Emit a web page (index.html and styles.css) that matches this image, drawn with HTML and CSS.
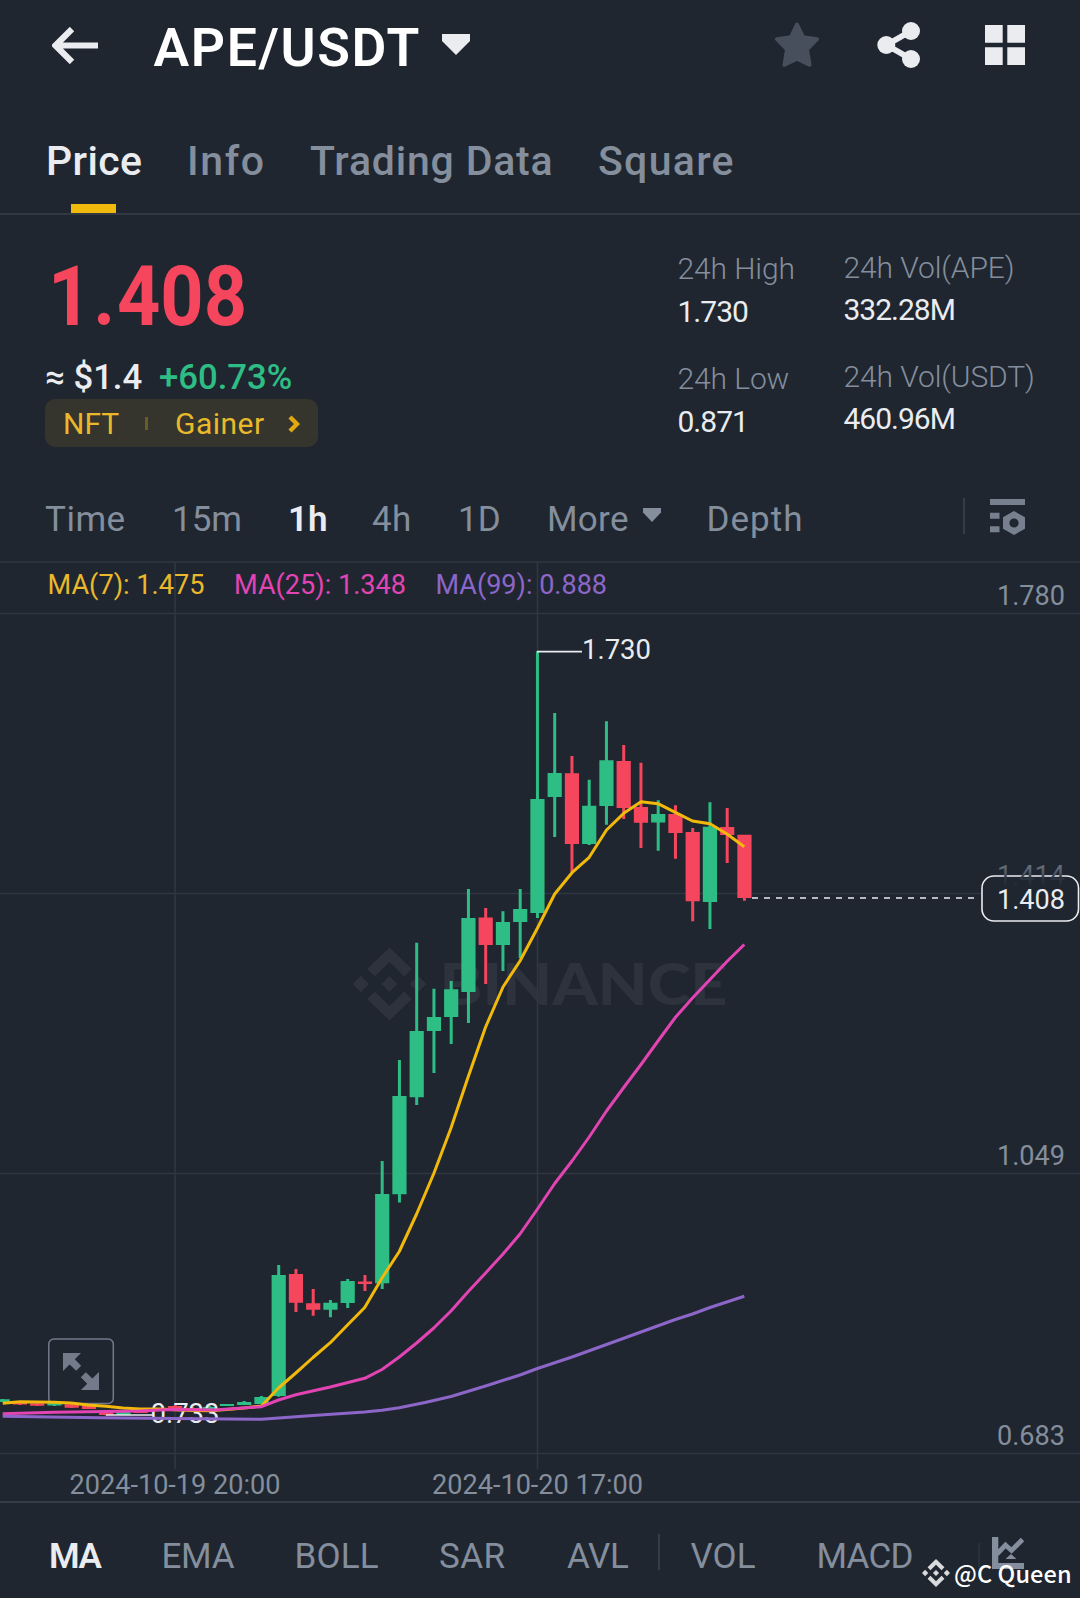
FILE: index.html
```html
<!DOCTYPE html>
<html lang="en">
<head>
<meta charset="utf-8">
<title>APE/USDT</title>
<link rel="stylesheet" href="styles.css">
</head>
<body>
<svg class="defs" width="0" height="0">
  <symbol id="logo" viewBox="-37 -37 74 74">
    <path d="M0-36.7-22.3-15l7.6 7.5L0-22 14.7-7.5l7.6-7.5zM0 36.7-22.3 15l7.6-7.5L0 22 14.7 7.5l7.6 7.5zM-28.7-8.3-37 0l8.3 8.3 8.3-8.3zM28.7-8.3 37 0l-8.3 8.3L20.4 0zM0-8l-8 8 8 8 8-8z"/>
  </symbol>
</svg>

<header class="header">
  <svg class="back" width="46" height="37" viewBox="0 0 46 37"><path d="M46 18.500H5M20 2 3.500 18.500 20 35" fill="none" stroke="#eaecef" stroke-width="6.200"/></svg>
  <h1 class="pair">APE/USDT</h1>
  <svg class="pair-caret" width="28" height="21" viewBox="0 0 28 21"><path d="M0 0h28v7L14 21 0 7z" fill="#eaecef"/></svg>
  <svg class="star" width="46" height="46" viewBox="0 0 46 46"><path d="M23 2.500 29.200 15.300 43 17.200 33 27.300 35.500 42.800 23 36.700 10.500 42.800 13 27.300 3 17.200 16.800 15.300z" fill="#474f5d" stroke="#474f5d" stroke-width="4" stroke-linejoin="round"/></svg>
  <svg class="share" width="44" height="46" viewBox="0 0 44 46" fill="#eaecef"><path d="M9.500 23 34 9M9.500 23 34 37" stroke="#eaecef" stroke-width="6"/><circle cx="9.300" cy="23" r="9"/><circle cx="34" cy="9" r="9"/><circle cx="34" cy="37" r="9"/></svg>
  <svg class="grid-icon" width="40" height="40" viewBox="0 0 40 40" fill="#eaecef"><path d="M0 0h17.700v17.700H0zM22.300 0H40v17.700H22.300zM0 22.300h17.700V40H0zM22.300 22.300H40V40H22.300z"/></svg>
</header>

<nav class="tabs">
  <a class="tab tab-active">Price</a>
  <a class="tab tab-info">Info</a>
  <a class="tab tab-trading">Trading Data</a>
  <a class="tab tab-square">Square</a>
</nav>

<section class="summary">
  <div class="quote">
    <div class="last">1<span class="dot">.</span>408</div>
    <div class="change"><span class="fiat">≈ $1.4</span><span class="up">+60.73%</span></div>
    <div class="tags">
      <span class="nft">NFT</span><i class="tag-sep"></i><span class="gainer">Gainer</span>
      <svg width="12" height="18" viewBox="0 0 12 18"><path d="M2 2l7 7-7 7" fill="none" stroke="#e0a90f" stroke-width="4.400"/></svg>
    </div>
  </div>
  <dl class="stats">
    <div><dt>24h High</dt><dd>1.730</dd></div>
    <div><dt>24h Low</dt><dd>0.871</dd></div>
  </dl>
  <dl class="stats stats-vol">
    <div><dt>24h Vol(APE)</dt><dd>332.28M</dd></div>
    <div><dt>24h Vol(USDT)</dt><dd>460.96M</dd></div>
  </dl>
</section>

<nav class="intervals">
  <span class="i-time">Time</span>
  <span class="i-15">15m</span>
  <span class="i-1h">1h</span>
  <span class="i-4h">4h</span>
  <span class="i-1d">1D</span>
  <span class="i-more">More</span>
  <svg class="more-caret" width="18" height="14" viewBox="0 0 18 14"><path d="M0 0h18v4.500L9 14 0 4.500z" fill="#848e9c"/></svg>
  <span class="i-depth">Depth</span>
  <i class="bar-sep"></i>
  <svg class="settings" width="35" height="36" viewBox="0 0 35 36" fill="#76808f"><path d="M0 0h35v6H0zM0 13.700h9.500v6H0zM0 27.300h9.500v6H0z"/><path fill-rule="evenodd" d="M24 12 35 18.200V29.800L24 36 13 29.800V18.200zM24 19.400a4.600 4.600 0 1 0 0 9.200 4.600 4.600 0 0 0 0-9.200z"/></svg>
</nav>

<main>
  <svg id="chart" class="chart" width="1080" height="938" viewBox="0 563 1080 938">
    <defs>
      <linearGradient id="fade" gradientUnits="userSpaceOnUse" x1="0" y1="864" x2="0" y2="886">
        <stop offset="0" stop-color="#6b7481"/><stop offset=".45" stop-color="#4d5561"/><stop offset=".6" stop-color="#2d3540"/><stop offset="1" stop-color="#222a34"/>
      </linearGradient>
    </defs>
    <g class="watermark"><use href="#logo" x="352.500" y="947" width="74" height="74"/><text x="439.500" y="1005" textLength="288" lengthAdjust="spacingAndGlyphs">BINANCE</text></g>
    <path class="gridline" d="M0 613.500H1080M0 893.500H1080M0 1173.500H1080M0 1453.500H1080M175 563V1469M537.500 563V1469"/>
    <g class="expand"><rect x="48.800" y="1339" width="64.500" height="64.500" rx="5"/><path d="M63 1353h18l-6.200 6.200 6.400 6.600-5 5-6.600-6.400-6.600 6.600zM99 1390H81l6.200-6.200-6.400-6.600 5-5 6.600 6.400 6.600-6.600z"/></g>
    <g id="candles"></g>
    <g class="callout">
      <path d="M537 651.700H582M106 1415H153"/>
      <text x="582" y="659" textLength="69" lengthAdjust="spacingAndGlyphs">1.730</text>
      <text x="150.500" y="1422.700" textLength="69" lengthAdjust="spacingAndGlyphs">0.733</text>
    </g>
    <g id="averages"></g>
    <path class="last-line" d="M752 898H975"/>
    <g class="axis">
      <text x="997" y="605" textLength="68" lengthAdjust="spacingAndGlyphs">1.780</text>
      <text x="997" y="1165" textLength="68" lengthAdjust="spacingAndGlyphs">1.049</text>
      <text x="997" y="1445" textLength="68" lengthAdjust="spacingAndGlyphs">0.683</text>
      <text x="69.500" y="1494" textLength="211" lengthAdjust="spacingAndGlyphs">2024-10-19 20:00</text>
      <text x="432" y="1494" textLength="211" lengthAdjust="spacingAndGlyphs">2024-10-20 17:00</text>
    </g>
    <g class="last-tag">
      <rect x="982" y="876" width="96.500" height="45" rx="12"/>
      <text class="covered" x="997" y="884.500" textLength="68" lengthAdjust="spacingAndGlyphs">1.414</text>
      <text x="997" y="909" textLength="68" lengthAdjust="spacingAndGlyphs">1.408</text>
    </g>
    <g class="legend">
      <text class="ma7" x="47.500" y="594" textLength="157" lengthAdjust="spacingAndGlyphs">MA(7): 1.475</text>
      <text class="ma25" x="234" y="594" textLength="172" lengthAdjust="spacingAndGlyphs">MA(25): 1.348</text>
      <text class="ma99" x="435.500" y="594" textLength="171.500" lengthAdjust="spacingAndGlyphs">MA(99): 0.888</text>
    </g>
  </svg>
</main>

<footer class="indicators">
  <span class="f-ma">MA</span>
  <span class="f-ema">EMA</span>
  <span class="f-boll">BOLL</span>
  <span class="f-sar">SAR</span>
  <span class="f-avl">AVL</span>
  <i class="foot-sep"></i>
  <span class="f-vol">VOL</span>
  <span class="f-macd">MACD</span>
  <i class="foot-sep foot-sep-dim"></i>
  <svg class="chart-icon" width="32" height="32" viewBox="0 0 32 32"><path fill="#848e9c" d="M0 0h6.300v26H32v6H0z"/><path d="M5 17 13.500 8 19.500 13.500 30.500 2.500" fill="none" stroke="#848e9c" stroke-width="4.800"/><path d="M19 17l5.500 5h-11z" fill="#848e9c"/></svg>
</footer>
<div class="credit"><svg width="28" height="28" fill="#d9dadc"><use href="#logo" width="28" height="28"/></svg><span>@C Queen</span></div>
<script src="chart.js"></script>
</body>
</html>
```
FILE: styles.css
```css
* { box-sizing: border-box; }
body {
  position: relative;
  width: 1080px;
  height: 1598px;
  margin: 0;
  overflow: hidden;
  background: #1f2630;
  color: #848e9c;
  font-family: Roboto, "Liberation Sans", sans-serif;
}
h1, dl, dd { margin: 0; font: inherit; }
svg { display: block; flex: none; }
.defs { position: absolute; }
span, a { white-space: nowrap; flex: none; }

.header { display: flex; height: 95px; align-items: flex-start; }
.back { margin: 26.5px 0 0 52px; }
.pair { width: 297px; margin-left: 55.5px; color: #fff; font-size: 53.5px; font-weight: 600; line-height: 95px; letter-spacing: 1.6px; }
.pair-caret { margin: 34px 0 0 -8.5px; }
.star { margin: 22px 0 0 304px; }
.share { margin: 22px 0 0 57px; }
.grid-icon { margin: 25px 0 0 64px; }

.tabs { display: grid; grid-template-columns: 141px 123px 288px 1fr; height: 120px; padding: 35.5px 0 0 46px; border-bottom: 2px solid #323942; font-size: 41px; font-weight: 500; line-height: 60px; }
.tab { height: 82.5px; }
.tab-info { letter-spacing: 1.6px; }
.tab-trading { letter-spacing: .8px; }
.tab-square { letter-spacing: 1.3px; }
.tab-active { display: flex; flex-direction: column; color: #eaecef; letter-spacing: .4px; }
.tab-active::after { content: ""; width: 45px; height: 9px; margin: 13.5px 0 0 25px; background: #f0b90b; }

.summary { display: flex; height: 260px; }
.quote { width: 677.5px; padding: 41.5px 0 0 45px; }
.last { height: 80px; color: #f6465d; font-size: 84px; font-weight: 700; line-height: 80px; transform: translateX(3px) scaleX(.9); transform-origin: left; }
.dot { margin: 0 2px; }
.change { display: flex; height: 44px; margin-top: 18.5px; font-size: 34.7px; font-weight: 500; line-height: 44px; }
.fiat { width: 114px; color: #eaecef; }
.up { color: #2ebd85; }
.tags { display: flex; align-items: center; width: 273px; height: 48px; padding: 1px 0 0 18px; border-radius: 10px; background: #35342d; color: #e9b92b; font-size: 30px; line-height: 47px; }
.nft { width: 82px; }
.tag-sep { width: 3px; height: 13px; background: #6b5b27; }
.gainer { width: 113px; margin-left: 27px; letter-spacing: .5px; }
.stats { width: 166px; padding-top: 32px; font-size: 30px; line-height: 43px; }
.stats-vol { width: 236px; padding-top: 31px; }
.stats > div { height: 86px; margin-bottom: 24px; }
.stats-vol > div { height: 85px; }
.stats dt { font-weight: 300; white-space: nowrap; letter-spacing: -.1px; }
.stats dd { color: #eaecef; letter-spacing: -1px; }
.stats-vol dd { line-height: 42px; }

.intervals { display: flex; align-items: center; height: 88px; padding: 2px 0 0 45px; border-bottom: 2px solid #2b323c; font-size: 35px; }
.i-time { width: 127px; letter-spacing: .5px; }
.i-15 { width: 116px; }
.i-1h { width: 84px; color: #eaecef; font-weight: 600; }
.i-4h { width: 86px; letter-spacing: .4px; }
.i-1d { width: 89px; }
.i-more { width: 96px; letter-spacing: .3px; }
.more-caret { margin-top: -8px; }
.i-depth { width: 256px; margin-left: 45.500px; letter-spacing: 1px; }
.bar-sep { width: 2px; height: 36px; margin-top: -6px; background: #353c47; }
.settings { margin: -4px 0 0 25px; }

.chart { font-size: 28px; }
.gridline { fill: none; stroke: #303741; stroke-width: 1.600; }
.watermark { fill: #2d323c; font: 900 57px Lato, sans-serif; }
.expand rect { fill: none; stroke: #737b8a; stroke-width: 1.500; }
.expand path { fill: #737b8a; }
.up-candle { fill: #2ebd85; }
.down-candle { fill: #f6465d; }
.average { fill: none; stroke-width: 3; stroke-linejoin: round; }
.average-7 { stroke: #f0b90b; }
.average-25 { stroke: #e244b4; }
.average-99 { stroke: #8d66c9; }
.callout path { stroke: #eaecef; stroke-width: 1.700; }
.callout text { fill: #eaecef; }
.last-line { stroke: #eaecef; stroke-width: 1.700; stroke-dasharray: 6 6; }
.axis { fill: #848e9c; }
.last-tag rect { fill: #1f2630; stroke: #eaecef; stroke-width: 1.600; }
.last-tag text { fill: #eaecef; }
.last-tag .covered { fill: url(#fade); }
.ma7 { fill: #e9b92b; }
.ma25 { fill: #e244b4; }
.ma99 { fill: #8d66c9; }

.indicators { display: flex; align-items: center; height: 97px; padding: 11px 0 0 49px; border-top: 2px solid #353c47; font-size: 35px; }
.f-ma { width: 112.500px; color: #eaecef; font-weight: 600; letter-spacing: -1.5px; }
.f-ema { width: 133px; letter-spacing: -.3px; }
.f-boll { width: 144.500px; letter-spacing: .2px; }
.f-sar { width: 128px; letter-spacing: .5px; }
.f-avl { width: 91px; letter-spacing: -.3px; }
.foot-sep { width: 2px; height: 36px; margin-top: -8px; background: #353c47; }
.f-vol { width: 126px; margin-left: 30.500px; }
.f-macd { width: 161.500px; letter-spacing: -.8px; }
.foot-sep-dim { height: 24px; margin-top: -2px; background: #29303b; }
.chart-icon { margin: -6px 0 0 12px; }
.credit { position: absolute; left: 922px; top: 1555px; display: flex; align-items: center; gap: 4px; color: #fff; font: 500 23.5px/36px "Noto Sans CJK SC", sans-serif; letter-spacing: .1px; }
```
FILE: chart.js
```js
const SVG = "http://www.w3.org/2000/svg";
const STEP = 17.25;
const FIRST_X = 2.7;

// direction, high, body top, body bottom, low
const candles = [
  ["u", 1399, 1399.3, 1402, 1402], ["d", 1402, 1402.5, 1404.5, 1405], ["d", 1403, 1403.3, 1405.7, 1406],
  ["u", 1403, 1403, 1405.5, 1406], ["d", 1404, 1404.3, 1407.7, 1408], ["d", 1405, 1405.7, 1409, 1409],
  ["d", 1410, 1411, 1415, 1415.5], ["u", 1411, 1411.7, 1415, 1415], ["d", 1410, 1411, 1413, 1413],
  ["u", 1408, 1409, 1411, 1411], ["d", 1405, 1406, 1409, 1409], ["d", 1407, 1408, 1410, 1410],
  ["u", 1406, 1407, 1409, 1409], ["u", 1404, 1404, 1406, 1406], ["u", 1401, 1402, 1405, 1405],
  ["u", 1396, 1397, 1404, 1404], ["u", 1265, 1275, 1396, 1396.7], ["d", 1269, 1274, 1302.7, 1312],
  ["d", 1289, 1303.3, 1309.7, 1315.7], ["u", 1300, 1302.7, 1309.7, 1317.3], ["u", 1279, 1281, 1303, 1308],
  ["d", 1275, 1281.5, 1284, 1291], ["u", 1161, 1194, 1283.3, 1289], ["u", 1060, 1096, 1194.3, 1202.5],
  ["u", 942.7, 1031, 1097.3, 1105], ["u", 988.7, 1017, 1031, 1073], ["u", 981, 989.3, 1017, 1044],
  ["u", 889, 918, 992, 1023], ["d", 908, 917.5, 945, 984], ["u", 911.3, 922, 945, 971],
  ["u", 889, 909, 922, 958], ["u", 651.3, 799, 913, 918], ["u", 713, 773, 797, 837],
  ["d", 756, 773.3, 844, 872], ["u", 779.7, 805.7, 844, 845], ["u", 721.3, 760.3, 806, 824.7],
  ["d", 745, 761, 808, 819], ["d", 762.7, 807, 822.7, 848], ["u", 800.3, 814, 822.5, 850.7],
  ["d", 805.3, 814, 833, 858.7], ["d", 828, 832, 901.3, 921.3], ["u", 802.3, 826.7, 902, 929],
  ["d", 808, 827, 835, 863], ["d", 834.7, 834.7, 898, 900.7]
];

const averages = {
  7: [[2.7, 1403.3], [20, 1401.7], [54, 1402.3], [71, 1403], [88, 1405], [106, 1406.3], [123, 1408], [140, 1409], [158, 1409], [192, 1410.5], [209, 1410.7], [227, 1409.5], [244, 1408], [261.5, 1406], [278.5, 1388], [295.8, 1373], [313, 1357.5], [330.3, 1342.7], [347.5, 1325], [364.7, 1307.5], [382, 1278], [399.3, 1251.5], [416.6, 1214], [433.8, 1173.5], [451, 1128], [468.3, 1076.5], [485.6, 1027], [503, 987], [520, 961], [537.5, 928], [554.7, 894], [572, 872.7], [589.2, 857.3], [606.5, 830], [623.7, 813.3], [641, 801.7], [658, 803.7], [675.3, 812.3], [692.5, 821], [710, 823.7], [727, 834], [744.3, 846.7]],
  25: [[2.7, 1413.7], [54, 1412.3], [140, 1411], [170, 1409.5], [215, 1410], [261.5, 1406.7], [278.5, 1400], [295.8, 1394.7], [330.3, 1387], [364.7, 1378.3], [382, 1369.5], [399.3, 1357], [416.6, 1343], [433.8, 1328], [451, 1311], [468.3, 1291.5], [485.6, 1273], [503, 1254], [520, 1234], [537.5, 1209], [554.7, 1183.5], [572, 1161], [589.2, 1137], [606.5, 1111], [623.7, 1087.5], [641, 1064.5], [658, 1041], [675.3, 1017.5], [692.5, 998], [710, 979.5], [727, 961.5], [744.3, 944.5]],
  99: [[2.7, 1416.3], [100, 1417.7], [200, 1418.7], [261.5, 1419.3], [313, 1415.5], [364.7, 1412], [382, 1410.3], [399.3, 1407.7], [425, 1402.5], [451, 1396.5], [485.6, 1386], [520, 1375], [537.5, 1368.5], [572, 1357], [606.5, 1344.5], [641, 1332], [675.3, 1319.5], [692.5, 1314], [710, 1307.5], [744.3, 1296.3]]
};

function add(parent, name, attributes) {
  const node = document.createElementNS(SVG, name);
  for (const key in attributes) node.setAttribute(key, attributes[key]);
  parent.appendChild(node);
}

const candleLayer = document.getElementById("candles");
candles.forEach(([direction, high, top, bottom, low], i) => {
  const x = FIRST_X + i * STEP;
  const d = `M${x - 1.5} ${high}h3V${low}h-3zM${x - 7.1} ${top}h14.2V${bottom}h-14.2z`;
  add(candleLayer, "path", { d, "fill-rule": "nonzero", class: direction === "u" ? "up-candle" : "down-candle" });
});

const averageLayer = document.getElementById("averages");
for (const period of [7, 25, 99]) {
  add(averageLayer, "polyline", { points: averages[period].join(" "), class: `average average-${period}` });
}
```
